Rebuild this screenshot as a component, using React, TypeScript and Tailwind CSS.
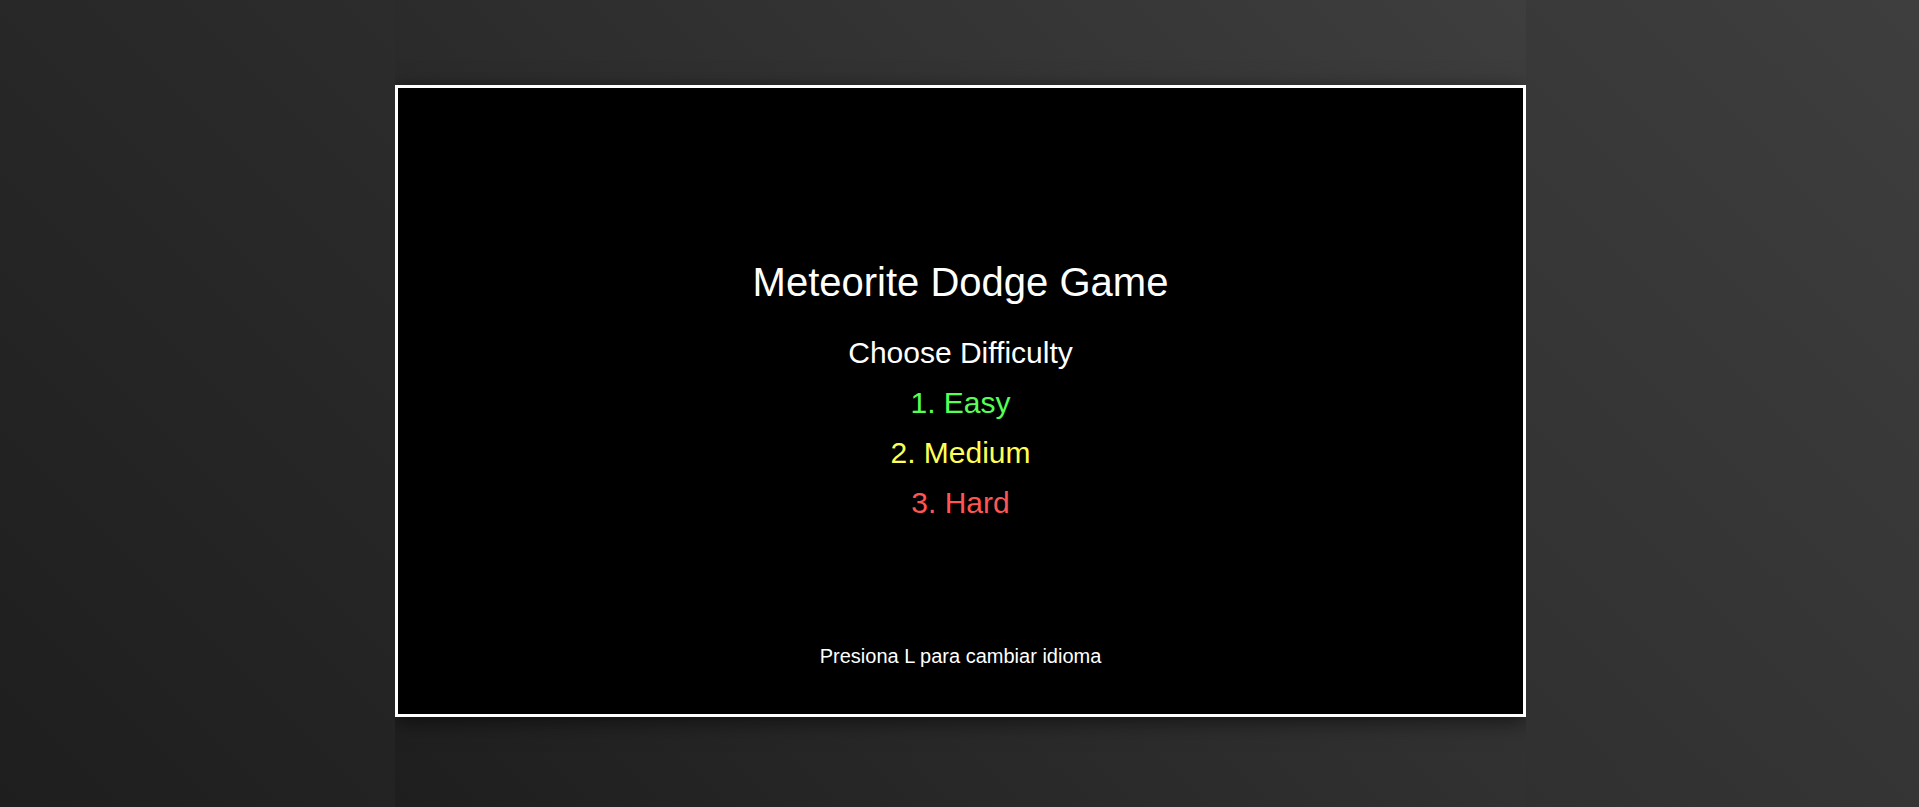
const levels = [
  { label: "1. Easy", color: "text-[#55ff55]" },
  { label: "2. Medium", color: "text-[#ffff55]" },
  { label: "3. Hard", color: "text-[#ff5555]" },
];

export default function App() {
  return (
    <div className="h-screen flex justify-center pl-[2px] bg-[linear-gradient(45deg,#1e1e1e,#3e3e3e)] font-['Liberation_Sans',Arial,sans-serif]">
      <div className="h-screen overflow-hidden flex flex-col justify-center pb-[5px] bg-[linear-gradient(45deg,#1e1e1e,#3e3e3e)]">
        {/* game screen */}
        <div className="w-[1131px] h-[632px] border-[3px] border-white bg-black shadow-[0_5px_20px_rgba(0,0,0,0.55)] flex flex-col items-center pt-[174px] pb-[48px] text-white">
          <h1 className="text-[40px] leading-[40px]">Meteorite Dodge Game</h1>
          <div className="mt-[26px] flex flex-col items-center">
            <p className="text-[30px] leading-[50px]">Choose Difficulty</p>
            {levels.map((lvl) => (
              <p key={lvl.label} className={`text-[30px] leading-[50px] ${lvl.color}`}>
                {lvl.label}
              </p>
            ))}
          </div>
          <p className="mt-auto text-[20px] leading-[20px]">Presiona L para cambiar idioma</p>
        </div>
      </div>
    </div>
  );
}
